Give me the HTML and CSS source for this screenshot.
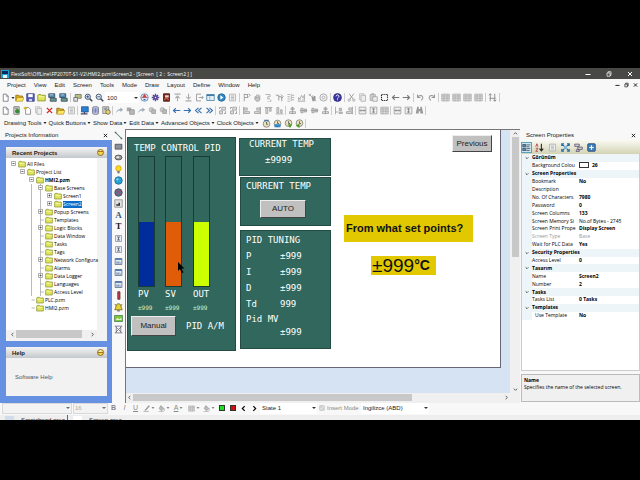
FILE: index.html
```html
<!DOCTYPE html>
<html lang="en">
    <head>
        <meta charset="utf-8">
        <title>FlexiSoft - HMI2.pzm</title>
        <link rel="stylesheet" href="styles.css">
    </head>

    <body>
        <!--Icon sprite-->
        <svg class="sprite" xmlns="http://www.w3.org/2000/svg">
            <symbol id="page" viewBox="0 0 12 12"><path d="M3 1.5h4l2.5 2.500v7h-6.500z" fill="#fff" stroke="#667"/><path d="M7 1.500v3h3" fill="none" stroke="#889"/></symbol>
            <symbol id="pagegreen" viewBox="0 0 12 12"><path d="M2.500 1h7v10h-7z" fill="#e8eee8" stroke="#555"/><circle cx="7" cy="7" r="3" fill="#3a8a38"/><path d="M4 3h4" stroke="#555"/></symbol>
            <symbol id="pagenew" viewBox="0 0 12 12"><path d="M3.500 2h4l2.500 2.500v6.500h-6.500z" fill="#fff" stroke="#777"/><path d="M1 3h4M3 1v4" stroke="#d9b51c" stroke-width="2"/></symbol>
            <symbol id="open" viewBox="0 0 12 12"><path d="M1 3h4l1 1h4v6h-9z" fill="#d7a81d" stroke="#8c6a10"/><path d="M3 6h9l-2 5h-9z" fill="#ffe35c" stroke="#9c7a15" stroke-width=".7"/></symbol>
            <symbol id="save" viewBox="0 0 12 12"><path d="M1 1h10v10h-10z" fill="#5660b5" stroke="#333a80"/><path d="M3 1.500h6v4h-6z" fill="#fff"/><path d="M4 8h4v3h-4z" fill="#cdd0ea"/></symbol>
            <symbol id="folder" viewBox="0 0 12 12"><path d="M1 3l1-1h3l1 1h5v7.500h-10z" fill="#dfe45a" stroke="#7d8a22"/><path d="M2 5h8" stroke="#fbffc0"/></symbol>
            <symbol id="pc" viewBox="0 0 12 12"><path d="M1 1h8v5h-8z" fill="#4b87b5" stroke="#345"/><path d="M3 7h8v4h-8z" fill="#698" stroke="#345"/><path d="M2 2.500h5" stroke="#cfe6f5"/></symbol>
            <symbol id="card" viewBox="0 0 12 12"><path d="M3 2h8v5h-8z" fill="#b9c27c" stroke="#666"/><path d="M1 6h5v5h-5z" fill="#ddd" stroke="#666"/></symbol>
            <symbol id="zoomin" viewBox="0 0 12 12"><path d="M7 7l4 4" stroke="#345" stroke-width="2"/><circle cx="5" cy="5" r="3.500" fill="#e2efff" stroke="#456" stroke-width="1.300"/><path d="M3 5h4M5 3v4" stroke="#237"/></symbol>
            <symbol id="zoomout" viewBox="0 0 12 12"><path d="M7 7l4 4" stroke="#345" stroke-width="2"/><circle cx="5" cy="5" r="3.500" fill="#e2efff" stroke="#456" stroke-width="1.300"/><path d="M3 5h4" stroke="#237"/></symbol>
            <symbol id="compile" viewBox="0 0 12 12"><circle cx="6" cy="6" r="5" fill="#dce8f3" stroke="#4c7dab"/><path d="M2 6h8M6 2l2 3h-4z" stroke="#c33" fill="#c33"/><path d="M4 8h4l-2 2z" fill="#36a"/></symbol>
            <symbol id="gear" viewBox="0 0 12 12"><path d="M6 1v10M1 6h10M2.500 2.500l7 7M9.500 2.500l-7 7" stroke="#549" stroke-width="1.800"/><circle cx="6" cy="6" r="3" fill="#549"/><circle cx="6" cy="6" r="1" fill="#fff"/></symbol>
            <symbol id="book" viewBox="0 0 12 12"><path d="M2 1h8v10h-8z" fill="#7c2420" stroke="#311"/><path d="M4 3h5v3h-5z" fill="#e9d3c4"/><path d="M3 9l3-2 3 2" stroke="#ea6" fill="none"/></symbol>
            <symbol id="up" viewBox="0 0 12 12"><path d="M2 1.500h8M6 11v-7M3 7l3-3 3 3" fill="none" stroke="#aaa" stroke-width="1.400"/></symbol>
            <symbol id="down" viewBox="0 0 12 12"><path d="M2 10.500h8M6 1v7M3 5l3 3 3-3" fill="none" stroke="#aaa" stroke-width="1.400"/></symbol>
            <symbol id="out" viewBox="0 0 12 12"><path d="M8 1.500h-6v9h6M5 6h6M9 4l2 2-2 2" fill="none" stroke="#999" stroke-width="1.200"/></symbol>
            <symbol id="window" viewBox="0 0 12 12"><path d="M1 2h10v8h-10z" fill="#e4f0f8" stroke="#3f7ba6"/><path d="M1 3h10" stroke="#3f7ba6" stroke-width="2"/><path d="M5 4v6" stroke="#8ab"/></symbol>
            <symbol id="play" viewBox="0 0 12 12"><circle cx="6" cy="6" r="5" fill="#2f88c4" stroke="#1c5c8c"/><path d="M4.500 3l4 3-4 3z" fill="#fff"/></symbol>
            <symbol id="doc" viewBox="0 0 12 12"><path d="M2 1.500h8v9h-8z" fill="#eee" stroke="#aaa"/><path d="M4 4h4M4 6h4M4 8h4" stroke="#aaa"/></symbol>
            <symbol id="flag" viewBox="0 0 12 12"><path d="M3 1v10M3 2h5l-1 2 1 2h-5M9 1l2 2-2 2" fill="none" stroke="#999" stroke-width="1.200"/></symbol>
            <symbol id="hand" viewBox="0 0 12 12"><path d="M3 6v-2M5 6v-4M7 6v-4M9 7v-4M3 6c-2 0 0 5 3 5s3-2 3-4z" fill="#ccc" stroke="#999" stroke-width="1.200"/></symbol>
            <symbol id="route" viewBox="0 0 12 12"><path d="M2 2h6v3h-3v3h3M5 11a2 2 0 1 0 4-2" fill="none" stroke="#aaa" stroke-width="1.200"/></symbol>
            <symbol id="step" viewBox="0 0 12 12"><path d="M1 3h4v7M5 5h4v6M8 2l3 3-3 3" fill="none" stroke="#999" stroke-width="1.200"/></symbol>
            <symbol id="list" viewBox="0 0 12 12"><path d="M2 2h3M2 5h3M2 8h3M2 11h3M7 1v10M8 3h3M8 6h3M8 9h3" stroke="#aaa" stroke-width="1.200"/></symbol>
            <symbol id="chart" viewBox="0 0 12 12"><path d="M1 11h10M2 10v-4l2 2 2-5 2 4 2-5v8M4 10v-2M8 10v-2" fill="none" stroke="#aaa" stroke-width="1.200"/></symbol>
            <symbol id="nohand" viewBox="0 0 12 12"><path d="M1 1l10 10M4 1l-3 3" stroke="#999"/><path d="M5 7v-2h1v-2h1v2h1v-1h2v5l-2 2h-2z" fill="#999"/></symbol>
            <symbol id="disc" viewBox="0 0 12 12"><circle cx="6" cy="6" r="4.800" fill="#f0f0f0" stroke="#999"/><circle cx="6" cy="6" r="1.800" fill="none" stroke="#aaa"/></symbol>
            <symbol id="help" viewBox="0 0 12 12"><circle cx="6" cy="6" r="5.200" fill="#3b35a5" stroke="#27236e"/><path d="M4 4.500c0-2.500 4-2.500 4 0 0 1.500-2 1.500-2 3M6 8.500v1.200" fill="none" stroke="#fff" stroke-width="1.200"/></symbol>
            <symbol id="cut" viewBox="0 0 12 12"><path d="M3 1l5 7M9 1l-5 7" stroke="#999" stroke-width="1.200"/><circle cx="3" cy="9.500" r="1.500" fill="none" stroke="#999"/><circle cx="9" cy="9.500" r="1.500" fill="none" stroke="#999"/></symbol>
            <symbol id="copy" viewBox="0 0 12 12"><path d="M2 1h6v8h-6z" fill="#eee" stroke="#bbb"/><path d="M4 3h6v8h-6z" fill="#eee" stroke="#aaa"/></symbol>
            <symbol id="paste" viewBox="0 0 12 12"><path d="M1.500 2h7v8h-7z" fill="#ccc" stroke="#aaa"/><path d="M5 5h6v6h-6z" fill="#eee" stroke="#999"/><path d="M3.500 1h3" stroke="#888"/></symbol>
            <symbol id="marquee" viewBox="0 0 12 12"><path d="M2 2h8v8h-8z" fill="none" stroke="#222" stroke-width="1.500" stroke-dasharray="1.600 1.100"/></symbol>
            <symbol id="left" viewBox="0 0 12 12"><path d="M11 6h-9M5 3l-3 3 3 3" fill="none" stroke="currentColor" stroke-width="1.500"/></symbol>
            <symbol id="right" viewBox="0 0 12 12"><path d="M1 6h9M7 3l3 3-3 3" fill="none" stroke="currentColor" stroke-width="1.500"/></symbol>
            <symbol id="undo" viewBox="0 0 12 12"><path d="M2 2v4h4M2 6c2-4 8-3 7 1l-2 3" fill="none" stroke="#999" stroke-width="1.400"/></symbol>
            <symbol id="redo" viewBox="0 0 12 12"><path d="M10 2v4h-4M10 6c-2-4-8-3-7 1l2 3" fill="none" stroke="#999" stroke-width="1.400"/></symbol>
            <symbol id="grid" viewBox="0 0 12 12"><path d="M1 1.500h10v9h-10zM1 4h10M4 2v9M8 2v9M1 7h10" fill="#ddd" stroke="#aaa"/></symbol>
            <symbol id="sortv" viewBox="0 0 12 12"><path d="M3 1v10M1 3l2-2 2 2M9 1v10M7 9l2 2 2-2M2 7h8" fill="none" stroke="#888" stroke-width="1.200"/></symbol>
            <symbol id="delete" viewBox="0 0 12 12"><path d="M2.500 2.500l7 7M9.500 2.500l-7 7" stroke="#d22c2c" stroke-width="1.800"/></symbol>
            <symbol id="screen" viewBox="0 0 12 12"><path d="M2 1h9v7h-9z" fill="#2a7fd4" stroke="#234f80"/><path d="M1 10.500h9M6 8v2" stroke="#446" stroke-width="1.500"/></symbol>
            <symbol id="data" viewBox="0 0 12 12"><rect x="2" y="1" width="8" height="10" rx="2" fill="#c8d0f0" stroke="#667"/><path d="M4 3v6M6 3v6M8 3v6" stroke="#56a"/></symbol>
            <symbol id="history" viewBox="0 0 12 12"><path d="M1 1h8v9h-8z" fill="#ddd8b0" stroke="#777"/><circle cx="8" cy="8" r="3" fill="#f4d36a" stroke="#555"/><path d="M3 3h4M3 5h3" stroke="#46a"/></symbol>
            <symbol id="rot" viewBox="0 0 12 12"><path d="M1 10c1-4 3-6 6-6v-2l4 3-4 3v-2c-3 0-4 1-6 4z" fill="#a4adb8"/></symbol>
            <symbol id="group" viewBox="0 0 12 12"><path d="M1 2h6v5h-6z" fill="#aaa"/><path d="M5 5h6v6h-6z" fill="#bbb" stroke="#888"/></symbol>
            <symbol id="layer" viewBox="0 0 12 12"><circle cx="4.500" cy="5" r="3" fill="#ccc" stroke="#aaa"/><path d="M5 5h5v5h-5z" fill="#bbb" stroke="#999"/></symbol>
            <symbol id="dleft" viewBox="0 0 12 12"><path d="M6 2.500l-4 3.500 4 3.500M10 2.500l-4 3.500 4 3.500" fill="none" stroke="#3570b0" stroke-width="1.500"/></symbol>
            <symbol id="dright" viewBox="0 0 12 12"><path d="M2 2.500l4 3.500-4 3.500M6 2.500l4 3.500-4 3.500" fill="none" stroke="#3570b0" stroke-width="1.500"/></symbol>
            <symbol id="order" viewBox="0 0 12 12"><path d="M5 1.500h5v4h-5zM2 6.500h4v4h-4z" fill="#ddd" stroke="#999"/><path d="M2 4v-2h2M10 7v3h-2" fill="none" stroke="#888"/></symbol>
            <symbol id="al" viewBox="0 0 12 12"><path d="M2 1v10M3 2.500h4v3h-4zM3 7.500h7v2.500h-7z" fill="#ddd" stroke="#999"/></symbol>
            <symbol id="ar" viewBox="0 0 12 12"><path d="M10 1v10M5 2.500h4v3h-4zM2 7.500h7v2.500h-7z" fill="#ddd" stroke="#999"/></symbol>
            <symbol id="at" viewBox="0 0 12 12"><path d="M1 2h10M2.500 3h2.500v7h-2.500zM7.500 3h2v4h-2z" fill="#ddd" stroke="#999"/></symbol>
            <symbol id="ab" viewBox="0 0 12 12"><path d="M1 10.500h10M2.500 2h2.500v7h-2.500zM7.500 5h2v4h-2z" fill="#ddd" stroke="#999"/></symbol>
            <symbol id="ac" viewBox="0 0 12 12"><path d="M6 1v10M4 2.500h4v2.500h-4zM2 7.500h8v2.500h-8z" fill="#ddd" stroke="#999"/></symbol>
            <symbol id="am" viewBox="0 0 12 12"><path d="M1 6h10M2.500 3h3v6h-3zM7 4h3v4h-3z" fill="#ccc" stroke="#999"/></symbol>
            <symbol id="sp" viewBox="0 0 12 12"><path d="M2 1v10M2 8h4M7 3h3v3h-3zM7 8h4v2h-4z" fill="#ccc" stroke="#999"/></symbol>
            <symbol id="size" viewBox="0 0 12 12"><path d="M1.500 1.500h9v9h-9z" fill="#eee" stroke="#999"/><path d="M3 6h6M4 4.500l-1.500 1.500 1.500 1.500M8 4.500l1.500 1.500-1.500 1.500" fill="none" stroke="#777"/></symbol>
            <symbol id="sizev" viewBox="0 0 12 12"><path d="M1.500 1.500h9v9h-9z" fill="#eee" stroke="#999"/><path d="M6 3v6M4 4h4M4 8h4" fill="none" stroke="#777"/></symbol>
            <symbol id="find" viewBox="0 0 12 12"><path d="M2 5l1-4h2v9h-4zM7 1h2l1 4 1 5h-4zM5 4h2v3h-2z" fill="#999"/></symbol>
            <symbol id="clockb" viewBox="0 0 12 12"><circle cx="6" cy="6.500" r="4.500" fill="#e8e2c2" stroke="#776"/><path d="M6 4v3h2" stroke="#444" fill="none"/><path d="M3 1h6v2h-6z" fill="#47a"/></symbol>
            <symbol id="clockm" viewBox="0 0 12 12"><circle cx="6" cy="6" r="4.500" fill="#e8e2c2" stroke="#776"/><path d="M6 3v3h2" stroke="#444" fill="none"/><path d="M2 7h8v4h-8z" fill="#2f86cf"/></symbol>
            <symbol id="clockg" viewBox="0 0 12 12"><circle cx="6" cy="5.500" r="4.500" fill="#e8e2c2" stroke="#776"/><path d="M6 3v3h2" stroke="#444" fill="none"/><path d="M5 7h6l-3 5z" fill="#4c9a25"/></symbol>
            <symbol id="clockr" viewBox="0 0 12 12"><circle cx="6" cy="5.500" r="4.500" fill="#e8e2c2" stroke="#776"/><path d="M6 3v3h2" stroke="#444" fill="none"/><path d="M1 9l5-3v6z" fill="#4c9a25"/></symbol>
            <!--Drawing strip-->
            <symbol id="line" viewBox="0 0 12 12"><path d="M2 2l8 8" stroke="#576" stroke-width="1.400"/><path d="M1 1h2v2h-2zM9 9h2v2h-2z" fill="#375"/></symbol>
            <symbol id="rect" viewBox="0 0 12 12"><path d="M1.500 3h9v6.500h-9z" fill="#889098" stroke="#445"/></symbol>
            <symbol id="oval" viewBox="0 0 12 12"><ellipse cx="6" cy="6" rx="4.700" ry="3.200" fill="#999" stroke="#444"/><ellipse cx="5" cy="5.500" rx="2" ry="1.200" fill="#eee"/></symbol>
            <symbol id="bulb" viewBox="0 0 12 12"><circle cx="6" cy="4.500" r="3.700" fill="#ffd91f" stroke="#a8860c" stroke-width=".7"/><path d="M4.500 8h3v3h-3z" fill="#777"/></symbol>
            <symbol id="ball" viewBox="0 0 12 12"><circle cx="6" cy="6" r="5" fill="#27a1d6" stroke="#175f84"/><circle cx="4.500" cy="4.500" r="1.500" fill="#8cdcf8"/></symbol>
            <symbol id="lamp" viewBox="0 0 12 12"><circle cx="6" cy="6" r="5" fill="#4a78a0" stroke="#345"/><path d="M3 3l6 6M9 3l-6 6" stroke="#b04a60" stroke-width="1.500"/></symbol>
            <symbol id="pic" viewBox="0 0 12 12"><path d="M1 1h10v10h-10z" fill="#e0e0e0" stroke="#888"/><path d="M3 9v-2h3v-2h2v4z" fill="#333"/></symbol>
            <symbol id="field" viewBox="0 0 12 12"><path d="M2 2h8v8h-8z" fill="#e8ecf4" stroke="#8890a0"/><path d="M4 4h4M6 4v4M4 8h4" stroke="#456"/></symbol>
            <symbol id="fieldb" viewBox="0 0 12 12"><path d="M1.500 2h9v8h-9z" fill="#e4ecf8" stroke="#567"/><path d="M2 3h8" stroke="#36a" stroke-width="1.500"/><path d="M4 6v3M6.500 6v3M8 8h1" stroke="#247"/></symbol>
            <symbol id="bar" viewBox="0 0 12 12"><path d="M5 1h3v10h-3z" fill="#b8444c" stroke="#622"/></symbol>
            <symbol id="bell" viewBox="0 0 12 12"><path d="M6 1c4 0 3 5 5 8h-10c2-3 1-8 5-8z" fill="#e8d030" stroke="#665a10"/><path d="M1 2l2 1M11 2l-2 1M4 10.500h4" stroke="#333"/></symbol>
            <symbol id="image" viewBox="0 0 12 12"><path d="M.5 2h11v8h-11z" fill="#7dc832" stroke="#476"/><path d="M2 8l3-3 2 2 3-2v3z" fill="#e8f4c8"/></symbol>
            <symbol id="timer" viewBox="0 0 12 12"><path d="M1 1.500h10M1 10.500h10M2 2l8 8M10 2l-8 8M3 2v8M9 2v8" stroke="#667" fill="none"/></symbol>
            <!--Tree and format bar-->
            <symbol id="minus" viewBox="0 0 7 8"><path d="M1.500 1.500h4v4h-4z" fill="#fff" stroke="#999" stroke-width=".8"/><path d="M2.500 3.500h2" stroke="#444" stroke-width=".8"/></symbol>
            <symbol id="plus" viewBox="0 0 7 8"><path d="M1.500 1.500h4v4h-4z" fill="#fff" stroke="#999" stroke-width=".8"/><path d="M2.500 3.500h2M3.500 2.500v2" stroke="#444" stroke-width=".8"/></symbol>
            <symbol id="leaf" viewBox="0 0 7 8"><path d="M3.500 4h4" stroke="#aaa" stroke-width=".8"/></symbol>
            <symbol id="pen" viewBox="0 0 12 12"><path d="M10 1l-5 6-2 2 3-1 5-6zM1 11h9" fill="#aaa" stroke="#888"/></symbol>
            <symbol id="bucket" viewBox="0 0 12 12"><path d="M5 1l5 5-4 4-4-4zM1 11.500h9" fill="#bbb" stroke="#888"/><path d="M10 6l1 4" stroke="#888"/></symbol>
            <symbol id="cross" viewBox="0 0 12 12"><path d="M2 2l8 8M10 2l-8 8" stroke="currentColor" stroke-width="2"/></symbol>
            <symbol id="cl" viewBox="0 0 12 12"><path d="M8 2l-4 4 4 4" fill="none" stroke="currentColor" stroke-width="2"/></symbol>
            <symbol id="cr" viewBox="0 0 12 12"><path d="M4 2l4 4-4 4" fill="none" stroke="currentColor" stroke-width="2"/></symbol>
            <symbol id="cu" viewBox="0 0 12 12"><path d="M2 8l4-4 4 4" fill="none" stroke="currentColor" stroke-width="2"/></symbol>
            <symbol id="cd" viewBox="0 0 12 12"><path d="M2 4l4 4 4-4" fill="none" stroke="currentColor" stroke-width="2"/></symbol>
            <symbol id="drop" viewBox="0 0 4 4"><path d="M.5 1h3l-1.500 2z" fill="currentColor"/></symbol>
            <symbol id="restore" viewBox="0 0 12 12"><path d="M2 4h6v6.500h-6zM4 4v-2.500h6v7h-2" fill="none" stroke="currentColor" stroke-width="1.400"/></symbol>
            <symbol id="min" viewBox="0 0 12 12"><path d="M1 7h10" stroke="currentColor" stroke-width="2"/></symbol>
            <symbol id="cat" viewBox="0 0 12 12"><path d="M1 2h4v3h-4zM1 7h4v3h-4z" fill="#5a92b4" stroke="#345"/><path d="M6 2.500h5M6 5h4M6 7.500h5M6 10h4" stroke="#345"/></symbol>
            <symbol id="az" viewBox="0 0 12 12"><path d="M1 5l1.500-4 1.500 4M1 7h3l-3 4h3" fill="none" stroke="#b33" stroke-width="1.100"/><path d="M8.500 1v9M6 7.500l2.500 3 2.500-3" fill="none" stroke="#222" stroke-width="1.400"/></symbol>
            <symbol id="expand" viewBox="0 0 12 12"><path d="M1 1l3.500 3.500M11 1l-3.500 3.500M1 11l3.500-3.500M11 11l-3.500-3.500M1 4v-3h3M8 1h3v3M1 8v3h3M8 11h3v-3" fill="none" stroke="#1f6fa8" stroke-width="1.500"/><path d="M4 4h4v4h-4z" fill="#7fb6dc"/></symbol>
            <symbol id="links" viewBox="0 0 12 12"><path d="M1 1.500h6v3h-6zM5 5.500h6v3h-6zM3 9h4v2.500h-4z" fill="#cdd" stroke="#546"/></symbol>
            <symbol id="add" viewBox="0 0 12 12"><rect x="1" y="1" width="10" height="10" rx="1" fill="#3c82c4" stroke="#235"/><path d="M3 6h6M6 3v6" stroke="#fff" stroke-width="1.600"/></symbol>
        </svg>

        <div class="app">
            <div class="title_bar">
                <svg class="app_icon" viewBox="0 0 8 8"><path d="M0 0h8v8h-8z" fill="#1fa0d8"/><path d="M1 1h6v3h-6z" fill="#0b2c5a"/><path d="M2 5h4v3h-4z" fill="#e9f6ff"/></svg>
                <span class="title_text">FlexiSoft\OffLine\FP2070T-S1-V2\HMI2.pzm\Screen2 - [Screen&nbsp; [ 2 :&nbsp; Screen2 ] ]</span>
                <div class="window_buttons">
                    <button aria-label="Minimize"><svg><use href="#min"/></svg></button>
                    <button aria-label="Restore"><svg><use href="#restore"/></svg></button>
                    <button aria-label="Close"><svg><use href="#cross"/></svg></button>
                </div>
            </div>

            <nav class="menu_bar">
                <button>Project</button><button>View</button><button>Edit</button><button>Screen</button><button>Tools</button><button>Mode</button><button>Draw</button><button>Layout</button><button>Define</button><button>Window</button><button>Help</button>
                <div class="child_buttons">
                    <button aria-label="Minimize screen"><svg><use href="#min"/></svg></button>
                    <button aria-label="Restore screen"><svg><use href="#restore"/></svg></button>
                    <button aria-label="Close screen"><svg><use href="#cross"/></svg></button>
                </div>
            </nav>

            <!--Standard toolbar-->
            <div class="toolbar standard">
                <button aria-label="New"><svg><use href="#page"/></svg></button>
                <button class="drop" aria-label="New options"><svg><use href="#drop"/></svg></button>
                <button aria-label="Open"><svg><use href="#open"/></svg></button>
                <button aria-label="Save"><svg><use href="#save"/></svg></button>
                <button aria-label="Close project"><svg><use href="#folder"/></svg></button>
                <button aria-label="Download"><svg><use href="#pc"/></svg></button>
                <button aria-label="Upload"><svg><use href="#pc"/></svg></button>
                <i class="sep"></i>
                <button aria-label="Properties"><svg><use href="#card"/></svg></button>
                <button aria-label="Zoom in"><svg><use href="#zoomin"/></svg></button>
                <button aria-label="Zoom out"><svg><use href="#zoomout"/></svg></button>
                <select class="zoom_level" aria-label="Zoom"><option>100</option></select>
                <button aria-label="Compile"><svg><use href="#compile"/></svg></button>
                <button aria-label="Settings"><svg><use href="#gear"/></svg></button>
                <button aria-label="Library"><svg><use href="#book"/></svg></button>
                <button aria-label="Up"><svg><use href="#up"/></svg></button>
                <button aria-label="Down"><svg><use href="#down"/></svg></button>
                <button aria-label="Export"><svg><use href="#out"/></svg></button>
                <button aria-label="Window"><svg><use href="#window"/></svg></button>
                <button aria-label="Simulate"><svg><use href="#play"/></svg></button>
                <button aria-label="Report"><svg><use href="#doc"/></svg></button>
                <i class="sep"></i>
                <button aria-label="Run"><svg><use href="#flag"/></svg></button>
                <button aria-label="Hold"><svg><use href="#hand"/></svg></button>
                <button aria-label="Route"><svg><use href="#route"/></svg></button>
                <button aria-label="Step"><svg><use href="#step"/></svg></button>
                <button aria-label="List"><svg><use href="#list"/></svg></button>
                <button aria-label="Chart"><svg><use href="#chart"/></svg></button>
                <button aria-label="Release"><svg><use href="#nohand"/></svg></button>
                <button aria-label="Stop"><svg><use href="#disc"/></svg></button>
                <i class="sep"></i>
                <button aria-label="Help"><svg><use href="#help"/></svg></button>
                <i class="sep"></i>
                <button aria-label="Cut"><svg><use href="#cut"/></svg></button>
                <button aria-label="Copy"><svg><use href="#copy"/></svg></button>
                <button aria-label="Paste"><svg><use href="#paste"/></svg></button>
                <button aria-label="Select all"><svg><use href="#marquee"/></svg></button>
                <button class="gray" aria-label="Back"><svg><use href="#left"/></svg></button>
                <button class="gray" aria-label="Forward"><svg><use href="#right"/></svg></button>
                <i class="sep"></i>
                <button aria-label="Undo"><svg><use href="#undo"/></svg></button>
                <button aria-label="Redo"><svg><use href="#redo"/></svg></button>
                <i class="sep"></i>
                <button aria-label="Table 1"><svg><use href="#grid"/></svg></button>
                <button aria-label="Table 2"><svg><use href="#grid"/></svg></button>
                <button aria-label="Table 3"><svg><use href="#grid"/></svg></button>
                <button aria-label="Table 4"><svg><use href="#grid"/></svg></button>
                <i class="sep"></i>
                <button aria-label="Sort"><svg><use href="#sortv"/></svg></button>
                <i class="sep"></i>
            </div>

            <!--Screen and layout toolbar-->
            <div class="toolbar">
                <button aria-label="New screen"><svg><use href="#page"/></svg></button>
                <button aria-label="Screen settings"><svg><use href="#pagegreen"/></svg></button>
                <button aria-label="Add screen"><svg><use href="#pagenew"/></svg></button>
                <button aria-label="Copy screen"><svg><use href="#copy"/></svg></button>
                <button aria-label="Delete screen"><svg><use href="#delete"/></svg></button>
                <button aria-label="Open screen"><svg><use href="#open"/></svg></button>
                <button aria-label="Save screen"><svg><use href="#doc"/></svg></button>
                <i class="sep"></i>
                <button aria-label="Display"><svg><use href="#screen"/></svg></button>
                <button aria-label="Data"><svg><use href="#data"/></svg></button>
                <button aria-label="History"><svg><use href="#history"/></svg></button>
                <i class="sep"></i>
                <button aria-label="Rotate"><svg><use href="#rot"/></svg></button>
                <button aria-label="Group"><svg><use href="#group"/></svg></button>
                <button aria-label="Rotate right"><svg><use href="#rot"/></svg></button>
                <button aria-label="Layer up"><svg><use href="#layer"/></svg></button>
                <button aria-label="Layer down"><svg><use href="#layer"/></svg></button>
                <i class="sep"></i>
                <button class="blue" aria-label="Previous screen"><svg><use href="#left"/></svg></button>
                <button class="blue" aria-label="Next screen"><svg><use href="#right"/></svg></button>
                <button aria-label="First screen"><svg><use href="#dleft"/></svg></button>
                <button aria-label="Last screen"><svg><use href="#dright"/></svg></button>
                <i class="sep"></i>
                <button aria-label="To front"><svg><use href="#order"/></svg></button>
                <button aria-label="To back"><svg><use href="#order"/></svg></button>
                <i class="sep"></i>
                <button aria-label="Align left"><svg><use href="#al"/></svg></button>
                <button aria-label="Align right"><svg><use href="#ar"/></svg></button>
                <button aria-label="Align top"><svg><use href="#at"/></svg></button>
                <button aria-label="Align bottom"><svg><use href="#ab"/></svg></button>
                <i class="sep"></i>
                <button aria-label="Align center"><svg><use href="#ac"/></svg></button>
                <button aria-label="Align middle"><svg><use href="#am"/></svg></button>
                <button aria-label="Center across"><svg><use href="#am"/></svg></button>
                <button aria-label="Center down"><svg><use href="#ac"/></svg></button>
                <i class="sep"></i>
                <button aria-label="Space across"><svg><use href="#sp"/></svg></button>
                <button aria-label="Space down"><svg><use href="#ar"/></svg></button>
                <i class="sep"></i>
                <button aria-label="Same width"><svg><use href="#size"/></svg></button>
                <button aria-label="Same height"><svg><use href="#sizev"/></svg></button>
                <button aria-label="Same size"><svg><use href="#grid"/></svg></button>
                <i class="sep"></i>
                <button aria-label="Fit width"><svg><use href="#size"/></svg></button>
                <button aria-label="Fit height"><svg><use href="#sizev"/></svg></button>
                <button aria-label="Find"><svg><use href="#find"/></svg></button>
                <i class="sep"></i>
            </div>

            <!--Object menus-->
            <div class="toolbar object_bar">
                <button class="object_menu">Drawing Tools <svg><use href="#drop"/></svg></button>
                <button class="object_menu">Quick Buttons <svg><use href="#drop"/></svg></button>
                <button class="object_menu">Show Data <svg><use href="#drop"/></svg></button>
                <button class="object_menu">Edit Data <svg><use href="#drop"/></svg></button>
                <button class="object_menu">Advanced Objects <svg><use href="#drop"/></svg></button>
                <button class="object_menu">Clock Objects <svg><use href="#drop"/></svg></button>
                <button aria-label="Time"><svg><use href="#clockb"/></svg></button>
                <button aria-label="Date"><svg><use href="#clockm"/></svg></button>
                <button aria-label="Set time"><svg><use href="#clockg"/></svg></button>
                <button aria-label="Set date"><svg><use href="#clockr"/></svg></button>
                <i class="sep"></i>
            </div>

            <div class="main">
                <aside class="projects">
                    <div class="pane_title">Projects Information <button aria-label="Close projects"><svg><use href="#cross"/></svg></button></div>
                    <div class="projects_body">
                        <section class="box recent">
                            <h2>Recent Projects <button class="collapse" aria-label="Collapse recent projects"></button></h2>
                            <ul class="tree">
                                <li class="l0"><svg><use href="#minus"/></svg><svg class="f"><use href="#folder"/></svg>All Files</li>
                                <li class="l1"><svg><use href="#minus"/></svg><svg class="f"><use href="#folder"/></svg>Project List</li>
                                <li class="l2 current"><svg><use href="#minus"/></svg><svg class="f"><use href="#folder"/></svg>HMI2.pzm</li>
                                <li class="l3"><svg><use href="#minus"/></svg><svg class="f"><use href="#folder"/></svg>Base Screens</li>
                                <li class="l4"><svg><use href="#plus"/></svg><svg class="f"><use href="#folder"/></svg>Screen1</li>
                                <li class="l4"><svg><use href="#plus"/></svg><svg class="f"><use href="#folder"/></svg><span class="selected">Screen2</span></li>
                                <li class="l3"><svg><use href="#plus"/></svg><svg class="f"><use href="#folder"/></svg>Popup Screens</li>
                                <li class="l3"><svg><use href="#leaf"/></svg><svg class="f"><use href="#folder"/></svg>Templates</li>
                                <li class="l3"><svg><use href="#plus"/></svg><svg class="f"><use href="#folder"/></svg>Logic Blocks</li>
                                <li class="l3"><svg><use href="#leaf"/></svg><svg class="f"><use href="#folder"/></svg>Data Window</li>
                                <li class="l3"><svg><use href="#leaf"/></svg><svg class="f"><use href="#folder"/></svg>Tasks</li>
                                <li class="l3"><svg><use href="#leaf"/></svg><svg class="f"><use href="#folder"/></svg>Tags</li>
                                <li class="l3"><svg><use href="#plus"/></svg><svg class="f"><use href="#folder"/></svg>Network Configura</li>
                                <li class="l3"><svg><use href="#leaf"/></svg><svg class="f"><use href="#folder"/></svg>Alarms</li>
                                <li class="l3"><svg><use href="#plus"/></svg><svg class="f"><use href="#folder"/></svg>Data Logger</li>
                                <li class="l3"><svg><use href="#leaf"/></svg><svg class="f"><use href="#folder"/></svg>Languages</li>
                                <li class="l3"><svg><use href="#leaf"/></svg><svg class="f"><use href="#folder"/></svg>Access Level</li>
                                <li class="l2"><svg><use href="#leaf"/></svg><svg class="f"><use href="#folder"/></svg>PLC.pzm</li>
                                <li class="l2"><svg><use href="#leaf"/></svg><svg class="f"><use href="#folder"/></svg>HMI2.pzm</li>
                            </ul>
                            <div class="hscroll tree_scroll"><svg><use href="#cl"/></svg><i class="thumb"></i><svg><use href="#cr"/></svg></div>
                        </section>
                        <section class="box">
                            <h2>Help <button class="collapse" aria-label="Collapse help"></button></h2>
                            <p><a href="#">Software Help</a></p>
                        </section>
                    </div>
                </aside>

                <div class="draw_strip">
                    <button aria-label="Line"><svg><use href="#line"/></svg></button>
                    <button aria-label="Rectangle"><svg><use href="#rect"/></svg></button>
                    <button aria-label="Ellipse"><svg><use href="#oval"/></svg></button>
                    <button aria-label="Bulb"><svg><use href="#bulb"/></svg></button>
                    <button aria-label="Bit lamp"><svg><use href="#ball"/></svg></button>
                    <button aria-label="Word lamp"><svg><use href="#lamp"/></svg></button>
                    <button aria-label="Picture"><svg><use href="#pic"/></svg></button>
                    <button class="letter a">A</button>
                    <button class="letter">T</button>
                    <button aria-label="Input"><svg><use href="#field"/></svg></button>
                    <button aria-label="Output"><svg><use href="#field"/></svg></button>
                    <button aria-label="Coil entry"><svg><use href="#fieldb"/></svg></button>
                    <button aria-label="Register entry"><svg><use href="#fieldb"/></svg></button>
                    <button aria-label="Date entry"><svg><use href="#fieldb"/></svg></button>
                    <button aria-label="Bar graph"><svg><use href="#bar"/></svg></button>
                    <button aria-label="Alarm"><svg><use href="#bell"/></svg></button>
                    <button aria-label="Image"><svg><use href="#image"/></svg></button>
                    <button aria-label="Timer"><svg><use href="#timer"/></svg></button>
                </div>

                <main class="editor">
                    <div class="workspace">
                        <div class="hmi_screen">
                            <!--PID control panel-->
                            <div class="hmi_panel control">
                                <div class="hmi_title">TEMP CONTROL PID</div>
                                <div class="tanks">
                                    <div><div class="tank"><i class="pv" style="height:50%"></i></div><b>PV</b><small>±999</small></div>
                                    <div><div class="tank"><i class="sv" style="height:50%"></i></div><b>SV</b><small>±999</small></div>
                                    <div><div class="tank"><i class="out" style="height:50%"></i></div><b>OUT</b><small>±999</small></div>
                                </div>
                                <div class="mode_row"><button class="hmi_button">Manual</button>PID A/M</div>
                            </div>
                            <div class="hmi_panel temp">
                                <div class="temp_title">CURRENT TEMP</div>
                                <div>±9999</div>
                            </div>
                            <div class="hmi_panel auto">
                                <div>CURRENT TEMP</div>
                                <button class="hmi_button">AUTO</button>
                            </div>
                            <div class="hmi_panel tuning">
                                <div>PID TUNING</div>
                                <dl>
                                    <dt>P</dt><dd>±999</dd>
                                    <dt>I</dt><dd>±999</dd>
                                    <dt>D</dt><dd>±999</dd>
                                    <dt>Td</dt><dd>999</dd>
                                    <dt class="wide">Pid MV</dt><dd class="last">±999</dd>
                                </dl>
                            </div>
                            <button class="hmi_button previous">Previous</button>
                            <div class="note question">From what set points?</div>
                            <div class="note reading">±999<span>°C</span></div>
                            <svg class="cursor" viewBox="0 0 7 11"><path d="M0 0l6.500 6.500h-3l2 4-1.800.500-1.700-4-2 2z" fill="#000"/></svg>
                        </div>
                    </div>
                    <div class="vscroll"><svg><use href="#cu"/></svg><i class="thumb"></i><svg><use href="#cd"/></svg></div>
                    <div class="hscroll"><svg><use href="#cl"/></svg><i class="thumb"></i><svg><use href="#cr"/></svg></div>
                </main>

                <aside class="properties">
                    <div class="pane_title">Screen Properties <button aria-label="Close properties"><svg><use href="#cross"/></svg></button></div>
                    <div class="prop_tools">
                        <button class="on" aria-label="Categorized"><svg><use href="#cat"/></svg></button>
                        <button aria-label="Alphabetical"><svg><use href="#az"/></svg></button>
                        <button aria-label="Pages"><svg><use href="#doc"/></svg></button>
                        <button aria-label="Expand"><svg><use href="#expand"/></svg></button>
                        <button aria-label="Links"><svg><use href="#links"/></svg></button>
                        <button aria-label="Add"><svg><use href="#add"/></svg></button>
                    </div>
                    <div class="prop_grid">
                        <table>
                            <colgroup><col class="mark_col"><col class="name_col"><col></colgroup>
                            <tr class="group"><td><svg><use href="#cd"/></svg></td><th colspan="2">Görünüm</th></tr>
                            <tr><td></td><th>Background Colou</th><td><i class="swatch"></i>26</td></tr>
                            <tr class="group"><td><svg><use href="#cd"/></svg></td><th colspan="2">Screen Properties</th></tr>
                            <tr><td></td><th>Bookmark</th><td>No</td></tr>
                            <tr><td></td><th>Description</th><td></td></tr>
                            <tr><td></td><th>No. Of Characters</th><td>7980</td></tr>
                            <tr><td></td><th>Password</th><td>0</td></tr>
                            <tr><td></td><th>Screen Columns</th><td>133</td></tr>
                            <tr class="plain"><td></td><th>Screen Memory Si</th><td>No.of Bytes - 2745</td></tr>
                            <tr><td></td><th>Screen Print Prope</th><td>Display Screen</td></tr>
                            <tr class="plain off"><td></td><th>Screen Type</th><td>Base</td></tr>
                            <tr><td></td><th>Wait for PLC Data</th><td>Yes</td></tr>
                            <tr class="group"><td><svg><use href="#cd"/></svg></td><th colspan="2">Security Properties</th></tr>
                            <tr><td></td><th>Access Level</th><td>0</td></tr>
                            <tr class="group"><td><svg><use href="#cd"/></svg></td><th colspan="2">Tasarım</th></tr>
                            <tr><td></td><th>Name</th><td>Screen2</td></tr>
                            <tr><td></td><th>Number</th><td>2</td></tr>
                            <tr class="group"><td><svg><use href="#cd"/></svg></td><th colspan="2">Tasks</th></tr>
                            <tr><td></td><th>Tasks List</th><td>0 Tasks</td></tr>
                            <tr class="group"><td><svg><use href="#cd"/></svg></td><th colspan="2">Templates</th></tr>
                            <tr><td></td><th class="sub">Use Template</th><td>No</td></tr>
                        </table>
                    </div>
                    <div class="prop_help"><b>Name</b>Specifies the name of the selected screen.</div>
                </aside>
            </div>

            <!--Text format bar-->
            <div class="format_bar">
                <select class="font_name" aria-label="Font" disabled><option></option></select>
                <select class="font_size" aria-label="Size" disabled><option>16</option></select>
                <button class="mark"><b>B</b></button>
                <button class="mark"><em>I</em></button>
                <button class="mark"><u>U</u></button>
                <button class="split" aria-label="Line colour"><svg><use href="#pen"/></svg><svg class="d"><use href="#drop"/></svg></button>
                <button class="split" aria-label="Fill colour"><svg><use href="#bucket"/></svg><svg class="d"><use href="#drop"/></svg></button>
                <button class="split"><u>A</u><svg class="d"><use href="#drop"/></svg></button>
                <button class="split" aria-label="Pattern"><svg><use href="#grid"/></svg><svg class="d"><use href="#drop"/></svg></button>
                <button class="split" aria-label="Back colour"><svg><use href="#bucket"/></svg><svg class="d"><use href="#drop"/></svg></button>
                <button class="mark" aria-label="On"><i class="lamp green"></i></button>
                <button class="mark" aria-label="Off"><i class="lamp red"></i></button>
                <button class="mark black" aria-label="Previous state"><svg><use href="#cl"/></svg></button>
                <button class="mark black" aria-label="Next state"><svg><use href="#cr"/></svg></button>
                <select class="state" aria-label="State"><option>State 1</option></select>
                <label class="insert"><input type="checkbox" checked disabled>Insert Mode</label>
                <select class="language" aria-label="Language"><option>Ingilizce (ABD)</option></select>
            </div>

            <div class="area_tabs">
                <a href="#" class="tab"><i class="tab_icon"></i>Scratchpad area</a>
                <a href="#" class="tab"><i class="tab_icon"></i>Screen area</a>
            </div>
        </div>
    </body>
</html>
```
FILE: styles.css
```css
* {
    box-sizing: border-box;
}
body {
    margin: 0;
    padding: 68px 0 60px;
    background-color: #000;
    color: #222;
    font-family: "Liberation Sans", sans-serif;
    font-size: 6px;
    line-height: 8px;
}
button, select, input {
    margin: 0;
    padding: 0;
    border: none;
    background: none;
    color: inherit;
    font: inherit;
}
a {
    color: inherit;
    text-decoration: none;
}
svg {
    display: block;
    flex: none;
}
.sprite {
    display: none;
}
.app {
    display: flex;
    flex-direction: column;
    height: calc(100vh - 128px);
    overflow: hidden;
    background-color: #f8f8f8;
}
/*Small text*/
.title_text, .tree, .prop_grid, .prop_help {
    font-family: "Open Sans", sans-serif;
    font-size: 5px;
}
/*Title bar and menu*/
.title_bar {
    display: flex;
    align-items: center;
    height: 11px;
    flex: none;
    padding-left: 1px;
    background-color: #484844;
    color: #fff;
}
.app_icon {
    width: 8px;
    height: 8px;
    margin-right: 2px;
}
.window_buttons, .child_buttons {
    display: flex;
    margin-left: auto;
}
.window_buttons button {
    display: flex;
    justify-content: center;
    width: 21px;
}
.window_buttons svg, .child_buttons svg {
    width: 6px;
    height: 6px;
}
.menu_bar {
    display: flex;
    align-items: center;
    gap: 8px;
    height: 12px;
    flex: none;
    padding-left: 7px;
}
.child_buttons {
    gap: 4px;
    padding-right: 2px;
    color: #000;
}
.child_buttons svg {
    width: 5px;
}
/*Toolbars*/
.toolbar {
    display: flex;
    align-items: center;
    height: 13px;
    flex: none;
}
.toolbar button {
    display: flex;
    align-items: center;
    justify-content: center;
    width: 11px;
    height: 11px;
    flex: none;
}
.toolbar button svg {
    width: 9px;
    height: 9px;
}
.toolbar .drop {
    width: 3px;
}
.toolbar .drop svg, .toolbar .object_menu svg {
    width: 4px;
    height: 4px;
}
.toolbar .gray {
    color: #777;
}
.toolbar .blue {
    color: #3570b0;
}
.sep {
    width: 1px;
    height: 9px;
    margin-right: 1px;
    flex: none;
    background-color: #ccc;
}
.standard .sep {
    margin-left: 1px;
}
.toolbar.object_bar {
    padding-left: 4px;
    height: 12px;
}
.toolbar .object_menu {
    width: auto;
    gap: 1px;
    margin-right: 2px;
}
select {
    appearance: none;
    height: 11px;
    background: url("data:image/svg+xml,%3Csvg xmlns='http://www.w3.org/2000/svg' width='4' height='4'%3E%3Cpath d='M0 1h4l-2 2z' fill='%23333'/%3E%3C/svg%3E") no-repeat right 1px center;
}
.zoom_level {
    width: 34px;
    padding-left: 2px;
    background-color: #fff;
}
/*Main row*/
.main {
    display: grid;
    grid-template-columns: 112px 13px 1fr 120px;
    flex: 1;
    min-height: 0;
}
.pane_title {
    display: flex;
    align-items: center;
    justify-content: space-between;
    height: 11px;
    flex: none;
    padding: 1px 4px 0 5px;
}
.pane_title svg {
    width: 5px;
    height: 5px;
    color: #000;
}
.projects {
    display: flex;
    flex-direction: column;
}
.projects_body {
    display: flex;
    flex-direction: column;
    gap: 6px;
    flex: 1;
    padding: 7px 5px 7px 6px;
    background-color: #6691e2;
}
.box {
    display: flex;
    flex-direction: column;
    height: 49px;
    background-color: #f2f2f2;
}
.box.recent {
    flex: 1;
}
.box h2 {
    display: flex;
    align-items: center;
    justify-content: space-between;
    height: 11px;
    margin: 0;
    padding: 0 3px 0 6px;
    border-radius: 2px 2px 0 0;
    background: linear-gradient(#f4f4f4, #c4c8cc);
    font-size: 6px;
}
.box p {
    margin: auto 9px;
    color: #555;
}
.collapse {
    width: 7px;
    height: 7px;
    border: 1px solid #93741c;
    border-radius: 50%;
    background: linear-gradient(#fbe9a0 30%, #a8741c 30%, #a8741c 50%, #f5d24c 50%);
}
.tree {
    display: grid;
    grid-auto-rows: 1fr;
    flex: 1;
    margin: 0 10px 0 0;
    padding: 2px 0 18px;
    background-color: #fff;
    color: #000;
    list-style: none;
}
.tree li {
    display: flex;
    align-items: center;
    min-height: 0;
    line-height: 7px;
    white-space: nowrap;
}
.tree svg {
    width: 7px;
    height: 8px;
    margin-right: 1px;
}
.tree .f {
    width: 8px;
    margin-right: 1px;
}
.tree .l0 {
    padding-left: 4px;
}
.tree .l1 {
    padding-left: 13px;
}
.tree .l2 {
    padding-left: 22px;
}
.tree .l3 {
    padding-left: 31px;
    background: linear-gradient(#bbb, #bbb) 25px 0 / 1px 100% no-repeat, linear-gradient(#bbb, #bbb) 34px 0 / 1px 100% no-repeat;
}
.tree .l4 {
    padding-left: 40px;
    background: linear-gradient(#bbb, #bbb) 25px 0 / 1px 100% no-repeat, linear-gradient(#bbb, #bbb) 34px 0 / 1px 100% no-repeat;
}
.tree .current {
    font-weight: bold;
}
.tree .selected {
    background-color: #0a6cc8;
    color: #fff;
}
/*Scroll bars*/
.hscroll, .vscroll {
    display: flex;
    align-items: center;
    background-color: #f0f0f0;
    color: #444;
}
.hscroll {
    height: 8px;
}
.vscroll {
    flex-direction: column;
}
.hscroll svg, .vscroll svg {
    width: 5px;
    height: 5px;
    margin: 1px;
}
.thumb {
    background-color: #c8c8c8;
}
.tree_scroll {
    margin: 0 10px 3px 0;
    padding-left: 3px;
}
.tree_scroll .thumb {
    width: 66px;
    height: 8px;
    margin-right: 7px;
}
/*Drawing strip*/
.draw_strip {
    display: flex;
    flex-direction: column;
    align-items: center;
    justify-content: space-between;
    padding: 2px 0 69px;
}
.draw_strip button {
    display: flex;
    align-items: center;
    justify-content: center;
    height: 8px;
}
.draw_strip svg {
    width: 9px;
    height: 9px;
}
.draw_strip .letter {
    font: bold 9px/9px "Liberation Serif", serif;
}
.draw_strip .a {
    color: #345a80;
}
/*Screen editor*/
.editor {
    display: grid;
    grid-template-columns: 1fr 10px;
    grid-template-rows: 1fr 10px;
    border-top: 1px solid #777;
    border-left: 1px solid #777;
    background-color: #f0f0f0;
}
.workspace {
    background-color: #d6e3f3;
    padding: 0 9px 25px 0;
}
.hmi_screen {
    position: relative;
    height: 100%;
    border-right: 1px solid #667;
    border-bottom: 1px solid #667;
    background-color: #fff;
}
.vscroll .thumb {
    width: 7px;
    height: 120px;
    margin-bottom: auto;
}
.editor .hscroll .thumb {
    width: 279px;
    height: 7px;
    margin-right: auto;
}
.hmi_panel {
    position: absolute;
    border: 1px solid #244b43;
    background-color: #31675c;
    color: #fff;
    font: 9px/16px "DejaVu Sans Mono", monospace;
}
.hmi_button {
    border: 1px solid #444;
    border-top-color: #eee;
    border-left-color: #eee;
    background-color: #c0c0c0;
    color: #222;
    font: 8px/10px "Liberation Sans", sans-serif;
}
.control {
    left: 1px;
    top: 7px;
    width: 109px;
    height: 214px;
}
.hmi_title {
    padding: 2px 0 0 6px;
}
.tanks {
    display: grid;
    grid-template-columns: 27px 28px 28px;
    padding-left: 10px;
}
.tank {
    display: flex;
    align-items: flex-end;
    width: 17px;
    height: 131px;
    border: 1px solid #1b3a34;
}
.tank i {
    width: 100%;
}
.pv {
    background-color: #002c9c;
}
.sv {
    background-color: #e05c08;
}
.out {
    background-color: #ccff00;
}
.tanks b, .tanks small {
    display: block;
    font-weight: normal;
    line-height: 14px;
}
.tanks small {
    color: #dff0c8;
    font-size: 6px;
}
.mode_row {
    display: flex;
    align-items: center;
    gap: 10px;
    padding: 1px 0 0 3px;
}
.mode_row .hmi_button {
    width: 45px;
    height: 20px;
}
.temp {
    left: 113px;
    top: 8px;
    width: 92px;
    height: 38px;
    padding-left: 25px;
}
.temp_title {
    margin: -3px 0 0 -16px;
}
.auto {
    left: 114px;
    top: 47px;
    width: 91px;
    height: 49px;
    padding-left: 5px;
}
.auto .hmi_button {
    display: block;
    width: 46px;
    height: 18px;
    margin: 6px 0 0 14px;
}
.tuning {
    left: 114px;
    top: 100px;
    width: 91px;
    height: 119px;
    padding: 1px 0 0 5px;
}
.tuning dl {
    display: grid;
    grid-template-columns: 34px 1fr;
    margin: 0;
}
.tuning dd {
    margin: 0;
}
.tuning .wide {
    grid-column: 1 / 3;
    line-height: 14px;
}
.tuning .last {
    grid-column: 2;
    line-height: 12px;
}
.previous {
    position: absolute;
    right: 8px;
    top: 5px;
    width: 40px;
    height: 17px;
}
.note {
    position: absolute;
    background-color: #e2c800;
    color: #111;
    font-family: "Liberation Sans", sans-serif;
}
.question {
    left: 218px;
    top: 85px;
    width: 129px;
    padding-left: 2px;
    font-size: 11px;
    font-weight: bold;
    line-height: 27px;
}
.reading {
    left: 245px;
    top: 126px;
    display: flex;
    width: 65px;
    padding-left: 1px;
    font-size: 19px;
    line-height: 19px;
}
.reading span {
    font-size: 14px;
    font-weight: bold;
}
.cursor {
    position: absolute;
    left: 52px;
    top: 132px;
    width: 7px;
    height: 11px;
}
/*Property pane*/
.properties {
    display: flex;
    flex-direction: column;
    padding-left: 1px;
    min-width: 0;
}
.prop_tools {
    display: flex;
    align-items: center;
    gap: 2px;
    height: 14px;
    flex: none;
    background: linear-gradient(#fafaf4, #d3d3b4);
}
.prop_tools button {
    display: flex;
    align-items: center;
    justify-content: center;
    width: 11px;
    height: 11px;
}
.prop_tools .on {
    outline: 1px solid #5aa0c0;
    outline-offset: -1px;
    background-color: #cde6f0;
}
.prop_tools svg {
    width: 9px;
    height: 9px;
}
.prop_grid {
    flex: 1;
    border: 1px solid #ccc;
    border-top: none;
    background-color: #fff;
    color: #000;
}
.prop_grid table {
    width: 100%;
    height: 166px;
    table-layout: fixed;
    border-collapse: collapse;
    line-height: 7px;
}
.mark_col {
    width: 10px;
}
.name_col {
    width: 47px;
}
.prop_grid td, .prop_grid th {
    padding: 0;
    font-weight: bold;
    text-align: left;
    white-space: nowrap;
}
.prop_grid tr > :first-child {
    background-color: #eef5f8;
}
.prop_grid th {
    font-weight: normal;
}
.prop_grid svg {
    width: 4px;
    height: 4px;
    margin: 0 3px;
}
.group {
    background-color: #eef5f8;
}
.prop_grid .group th {
    font-weight: bold;
}
.prop_grid .plain td {
    font-weight: normal;
}
.off {
    color: #999;
}
.prop_grid .sub {
    padding-left: 3px;
}
.swatch {
    display: inline-block;
    width: 10px;
    height: 6px;
    margin-right: 3px;
    border: 1px solid #333;
    vertical-align: top;
}
.prop_help {
    height: 28px;
    margin: 3px 0 1px;
    padding: 2px;
    border: 1px solid #bbb;
    background-color: #f0f0f0;
    color: #000;
    line-height: 7px;
    white-space: nowrap;
}
.prop_help b {
    display: block;
}
/*Format bar*/
.format_bar {
    display: flex;
    align-items: center;
    height: 14px;
    flex: none;
    padding-left: 2px;
    color: #888;
}
.font_name, .font_size {
    border: 1px solid #ccc;
    background-color: #f2f2f2;
}
.font_name {
    width: 70px;
    margin-right: 1px;
}
.font_size {
    width: 35px;
    padding-left: 1px;
}
.mark, .split {
    display: flex;
    align-items: center;
    justify-content: center;
    width: 11px;
    height: 11px;
    font-size: 7px;
}
.mark svg, .split svg {
    width: 7px;
    height: 7px;
}
.split {
    width: 15px;
    gap: 1px;
}
.split .d {
    width: 4px;
    height: 4px;
}
.mark.black {
    color: #000;
}
.lamp {
    width: 6px;
    height: 6px;
    border: 1px solid #333;
}
.green {
    background-color: #1fe01f;
}
.red {
    background-color: #d01010;
}
.state, .language {
    color: #222;
    background-color: #fff;
}
.state {
    width: 57px;
    padding-left: 2px;
}
.insert {
    display: flex;
    align-items: center;
    gap: 2px;
    width: 42px;
    margin-left: 2px;
    white-space: nowrap;
}
.insert input {
    width: 6px;
    height: 6px;
}
.language {
    width: 68px;
    padding-left: 2px;
}
.area_tabs {
    display: flex;
    height: 5px;
    flex: none;
    background-color: #eee;
    overflow: hidden;
}
.tab {
    display: flex;
    gap: 7px;
    padding: 1px 2px 0 5px;
    border-right: 1px solid #666;
}
.tab:last-child {
    border: none;
}
.tab_icon {
    width: 9px;
    height: 8px;
    background-color: #cfdcec;
}
.tab:last-child .tab_icon {
    background-color: #fff;
}
```
